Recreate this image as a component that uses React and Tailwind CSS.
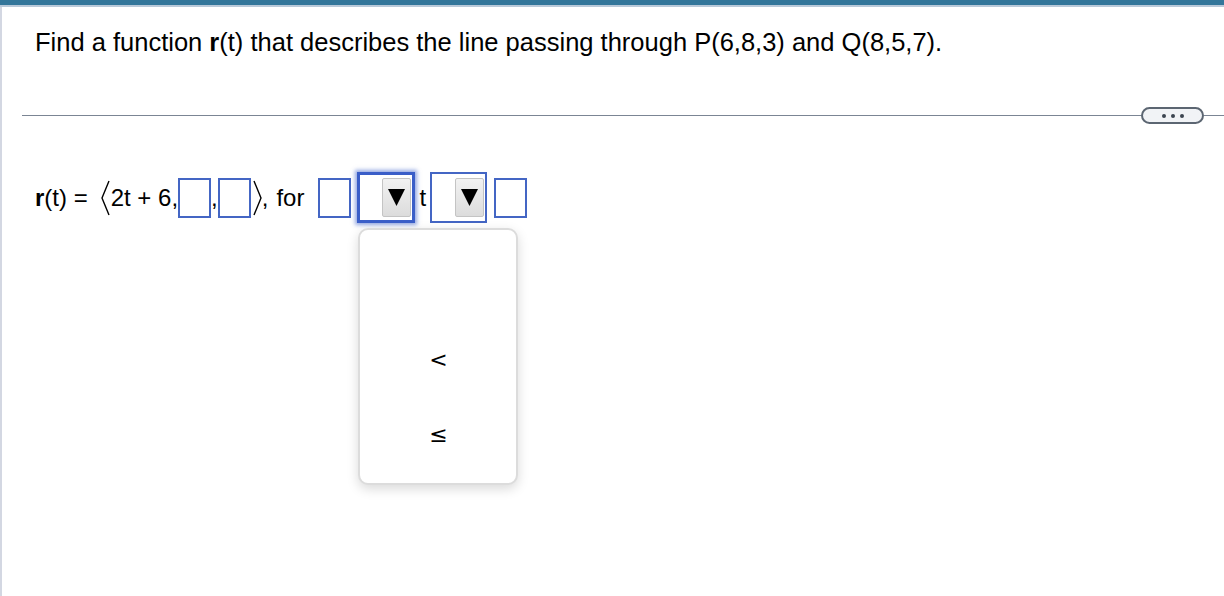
import React from 'react';

const font = { fontFamily: '"Liberation Sans", Arial, sans-serif' };

function Box() {
    return <span className="inline-block w-[33px] h-[40px] border-2 border-[#4466c4] bg-white shrink-0" />;
}

function Caret() {
    return (
        <span className="flex items-center justify-center w-[29px] h-[39px] bg-gradient-to-b from-[#f2f2f2] to-[#dcdcdc] border border-[#c4c4c4] rounded-[2px]">
            <svg width="17" height="17" viewBox="0 0 17 17">
                <polygon points="0,0 17,0 8.5,17" fill="#000" />
            </svg>
        </span>
    );
}

function Angle({ right }) {
    return (
        <svg width="9" height="36" viewBox="0 0 9 36" className="shrink-0">
            <polyline
                points={right ? '1,1 8,18 1,35' : '8,1 1,18 8,35'}
                fill="none"
                stroke="#000"
                strokeWidth="1.4"
            />
        </svg>
    );
}

export default function App() {
    return (
        <div className="min-h-screen bg-white" style={font}>
            <div className="h-[5px] bg-[#33769a]" />
            <div className="h-[2px] bg-[#b9c9d9]" />
            <div className="border-l-2 border-[#d3d7e2] min-h-[589px]">
                <p className="pl-[33px] pt-[20px] text-[25.5px] leading-[30px] text-black whitespace-nowrap">
                    Find a function <b>r</b>(t) that describes the line passing through P(6,8,3) and Q(8,5,7).
                </p>

                <div className="flex items-center ml-[20px] mt-[50px]">
                    <div className="flex-1 h-px bg-[#7b8594]" />
                    <div className="flex items-center justify-center gap-[5px] w-[63px] h-[17px] rounded-full border-2 border-[#5c6672] bg-[#f1f3f6]">
                        <span className="w-[4px] h-[4px] rounded-full bg-[#3c4550]" />
                        <span className="w-[4px] h-[4px] rounded-full bg-[#3c4550]" />
                        <span className="w-[4px] h-[4px] rounded-full bg-[#3c4550]" />
                    </div>
                    <div className="w-[20px] h-px bg-[#7b8594]" />
                </div>

                <div className="flex items-center pl-[33px] mt-[48px] text-[24px] text-black whitespace-nowrap">
                    <span><b>r</b>(t) =</span>
                    <span className="ml-[13px] mr-[1px] flex"><Angle /></span>
                    <span>2t + 6,</span>
                    <Box />
                    <span>,</span>
                    <Box />
                    <span className="ml-[2px] flex"><Angle right /></span>
                    <span>,</span>
                    <span className="ml-[8px]">for</span>
                    <span className="ml-[14px] flex"><Box /></span>
                    <div className="relative ml-[6px]">
                        <div className="flex items-center justify-end w-[58px] h-[51px] border-[3px] border-[#3a5ec8] shadow-[0_0_4px_2px_rgba(58,94,200,0.55)] pr-[1px]">
                            <Caret />
                        </div>
                        <div className="absolute left-[1px] top-[56px] w-[160px] h-[257px] bg-white border-2 border-[#dcdcdc] rounded-[10px] shadow-[0_4px_12px_rgba(0,0,0,0.15)] flex flex-col items-center text-[22px]" style={{ fontFamily: '"DejaVu Sans", sans-serif' }}>
                            <span className="mt-[113px]">&lt;</span>
                            <span className="mt-[42px]">≤</span>
                        </div>
                    </div>
                    <span className="mx-[4px]">t</span>
                    <div className="flex items-center justify-end w-[57px] h-[51px] border-2 border-[#4466c4] pr-[1px]">
                        <Caret />
                    </div>
                    <span className="ml-[7px] flex"><Box /></span>
                </div>
            </div>
        </div>
    );
}
